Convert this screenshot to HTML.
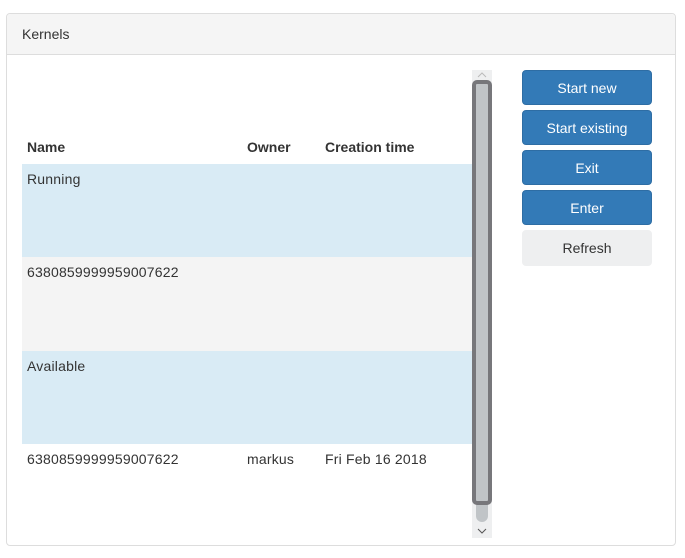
<!DOCTYPE html>
<html><head><style>
body{margin:0;width:685px;height:558px;background:#fff;font-family:"Liberation Sans",sans-serif;font-size:14px;color:#333;position:relative;overflow:hidden}
.panel{position:absolute;left:6px;top:13px;width:668px;height:531px;border:1px solid #ddd;border-radius:4px}
.hd{height:40px;background:#f5f5f5;border-bottom:1px solid #ddd;line-height:40px;padding-left:15px;border-radius:4px 4px 0 0}
.a{position:absolute}
.row{position:absolute;left:22px;width:450px}
.row span{position:absolute;top:7px;letter-spacing:0.2px}
.btn{position:absolute;left:522px;width:128px;height:33px;border:1px solid #2e6da4;background:#337ab7;color:#fff;border-radius:4px;text-align:center;line-height:34px}
</style></head><body>
<div class="panel"><div class="hd">Kernels</div></div>
<div class="row" style="top:132px;height:29px;font-weight:bold"><span style="left:5px;letter-spacing:0">Name</span><span style="left:225px;letter-spacing:0">Owner</span><span style="left:303px;letter-spacing:0">Creation time</span></div>
<div class="row" style="top:164px;height:93px;background:#d9ebf5"><span style="left:5px">Running</span></div>
<div class="row" style="top:257px;height:94px;background:#f4f4f4"><span style="left:5px">6380859999959007622</span></div>
<div class="row" style="top:351px;height:93px;background:#d9ebf5"><span style="left:5px">Available</span></div>
<div class="row" style="top:444px;height:60px"><span style="left:5px">6380859999959007622</span><span style="left:225px">markus</span><span style="left:303px">Fri Feb 16 2018</span></div>
<div class="a" style="left:472px;top:70px;width:20px;height:468px;background:#eeeff0"></div>
<div class="a" style="left:476px;top:495px;width:12px;height:27px;background:#c0c4c7;border-radius:0 0 6px 6px"></div>
<div class="a" style="left:472px;top:80px;width:12px;height:417px;border:4px solid #77777b;background:#c0c4c7;border-radius:5px"></div>
<svg class="a" style="left:477px;top:72px" width="10" height="6"><path d="M1 5L5 1L9 5" stroke="#bbb" fill="none"/></svg>
<svg class="a" style="left:477px;top:528px" width="10" height="6"><path d="M1 1L5 5L9 1" stroke="#555" fill="none"/></svg>
<div class="btn" style="top:70px">Start new</div>
<div class="btn" style="top:110px">Start existing</div>
<div class="btn" style="top:150px">Exit</div>
<div class="btn" style="top:190px">Enter</div>
<div class="btn" style="top:230px;background:#eeeff0;border-color:#eeeff0;color:#333;height:34px">Refresh</div>
</body></html>
